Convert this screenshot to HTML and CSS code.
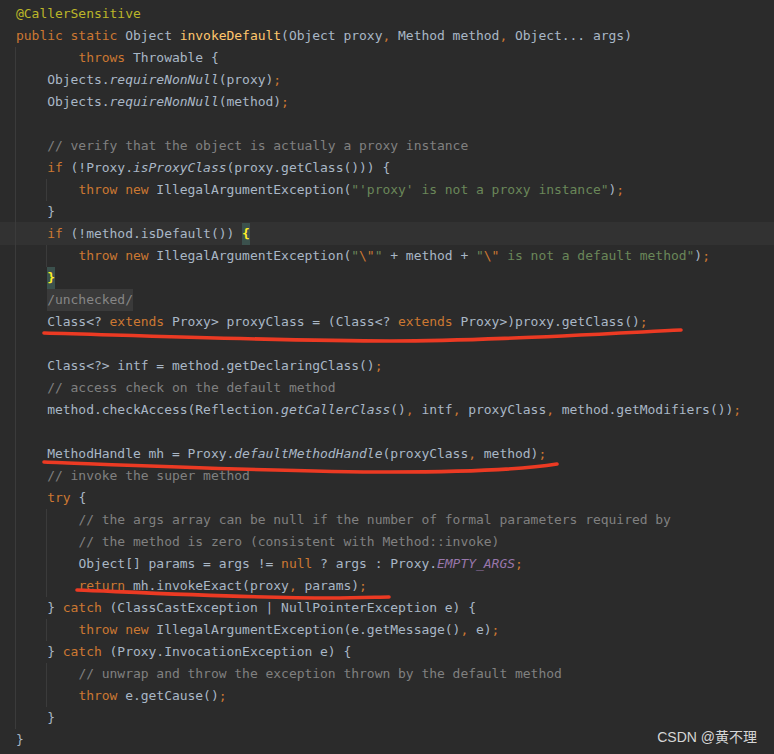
FILE: index.html
```html
<!DOCTYPE html>
<html>
<head>
<meta charset="utf-8">
<link rel="stylesheet" href="styles.css">
</head>
<body>
<div class="editor">
<div class="code">
<div class="ln"><span class="a">@CallerSensitive</span></div>
<div class="ln"><span class="k">public static </span>Object <span class="f">invokeDefault</span>(Object proxy<span class="k">, </span>Method method<span class="k">, </span>Object... args)</div>
<div class="ln"><span class="ind g"></span><span class="ind"></span><span class="k">throws </span>Throwable {</div>
<div class="ln"><span class="ind g"></span>Objects.<span class="i">requireNonNull</span>(proxy)<span class="k">;</span></div>
<div class="ln"><span class="ind g"></span>Objects.<span class="i">requireNonNull</span>(method)<span class="k">;</span></div>
<div class="ln"><span class="ind g"></span></div>
<div class="ln"><span class="ind g"></span><span class="c">// verify that the object is actually a proxy instance</span></div>
<div class="ln"><span class="ind g"></span><span class="k">if </span>(!Proxy.<span class="i">isProxyClass</span>(proxy.getClass())) {</div>
<div class="ln"><span class="ind g"></span><span class="ind g"></span><span class="k">throw new </span>IllegalArgumentException(<span class="s">"'proxy' is not a proxy instance"</span>)<span class="k">;</span></div>
<div class="ln"><span class="ind g"></span>}</div>
<div class="ln cur"><span class="ind g"></span><span class="k">if </span>(!method.isDefault()) <span class="br">{</span></div>
<div class="ln"><span class="ind g"></span><span class="ind g"></span><span class="k">throw new </span>IllegalArgumentException(<span class="s">"<span class="e">\"</span>"</span> + method + <span class="s">"<span class="e">\"</span> is not a default method"</span>)<span class="k">;</span></div>
<div class="ln"><span class="ind g"></span><span class="br">}</span></div>
<div class="ln"><span class="ind g"></span><span class="fold">/unchecked/</span></div>
<div class="ln"><span class="ind g"></span>Class&lt;? <span class="k">extends </span>Proxy&gt; proxyClass = (Class&lt;? <span class="k">extends </span>Proxy&gt;)proxy.getClass()<span class="k">;</span></div>
<div class="ln"><span class="ind g"></span></div>
<div class="ln"><span class="ind g"></span>Class&lt;?&gt; intf = method.getDeclaringClass()<span class="k">;</span></div>
<div class="ln"><span class="ind g"></span><span class="c">// access check on the default method</span></div>
<div class="ln"><span class="ind g"></span>method.checkAccess(Reflection.<span class="i">getCallerClass</span>()<span class="k">, </span>intf<span class="k">, </span>proxyClass<span class="k">, </span>method.getModifiers())<span class="k">;</span></div>
<div class="ln"><span class="ind g"></span></div>
<div class="ln"><span class="ind g"></span>MethodHandle mh = Proxy.<span class="i">defaultMethodHandle</span>(proxyClass<span class="k">, </span>method)<span class="k">;</span></div>
<div class="ln"><span class="ind g"></span><span class="c">// invoke the super method</span></div>
<div class="ln"><span class="ind g"></span><span class="k">try </span>{</div>
<div class="ln"><span class="ind g"></span><span class="ind g"></span><span class="c">// the args array can be null if the number of formal parameters required by</span></div>
<div class="ln"><span class="ind g"></span><span class="ind g"></span><span class="c">// the method is zero (consistent with Method::invoke)</span></div>
<div class="ln"><span class="ind g"></span><span class="ind g"></span>Object[] params = args != <span class="k">null </span>? args : Proxy.<span class="p">EMPTY_ARGS</span><span class="k">;</span></div>
<div class="ln"><span class="ind g"></span><span class="ind g"></span><span class="k">return </span>mh.invokeExact(proxy<span class="k">, </span>params)<span class="k">;</span></div>
<div class="ln"><span class="ind g"></span>} <span class="k">catch </span>(ClassCastException | NullPointerException e) {</div>
<div class="ln"><span class="ind g"></span><span class="ind g"></span><span class="k">throw new </span>IllegalArgumentException(e.getMessage()<span class="k">, </span>e)<span class="k">;</span></div>
<div class="ln"><span class="ind g"></span>} <span class="k">catch </span>(Proxy.InvocationException e) {</div>
<div class="ln"><span class="ind g"></span><span class="ind g"></span><span class="c">// unwrap and throw the exception thrown by the default method</span></div>
<div class="ln"><span class="ind g"></span><span class="ind g"></span><span class="k">throw </span>e.getCause()<span class="k">;</span></div>
<div class="ln"><span class="ind g"></span>}</div>
<div class="ln">}</div>
</div>
<svg class="marks" width="774" height="754" viewBox="0 0 774 754">
<path d="M44 333 C 150 336, 290 341, 390 341 C 470 341, 560 336, 681 330"/>
<path d="M44 462 C 150 466, 290 472, 390 472 C 460 472, 520 470, 557 464"/>
<path d="M77 590 C 150 593, 250 598, 330 598 C 360 598, 380 597, 389 597"/>
</svg>
<div class="wm">CSDN @黄不理</div>
</div>
</body>
</html>
```

FILE: styles.css
```css
html, body {
  margin: 0;
  padding: 0;
  background: #2b2b2b;
}
.editor {
  position: relative;
  width: 774px;
  height: 754px;
  overflow: hidden;
  background: #2b2b2b;
}
.code {
  padding-top: 3px;
  font-family: "DejaVu Sans Mono", "Liberation Mono", monospace;
  font-size: 13px;
  letter-spacing: -0.03px;
  color: #a9b7c6;
}
.ln {
  height: 22px;
  line-height: 22px;
  padding-left: 16px;
  white-space: pre;
}
.ln.cur {
  background: #323232;
  margin-top: -1px;
  padding-top: 1px;
}
.ind {
  display: inline-block;
  vertical-align: top;
  height: 22px;
  width: 31.2px;
  margin-left: -1px;
  padding-left: 1px;
}
.ind.g {
  background: linear-gradient(#3b3b3b, #3b3b3b) 0 0 / 1px 100% no-repeat;
}
.k { color: #cc7832; }
.c { color: #808080; }
.s { color: #6a8759; }
.e { color: #cc7832; }
.a { color: #bbb529; }
.f { color: #ffc66d; }
.i { font-style: italic; }
.p { color: #9876aa; font-style: italic; }
.br {
  display: inline-block;
  vertical-align: top;
  height: 22px;
  background: #3b514d;
  color: #ffef28;
  font-weight: bold;
}
.fold {
  display: inline-block;
  vertical-align: top;
  height: 22px;
  background: #3a3a3a;
  color: #868686;
}
.marks {
  position: absolute;
  left: 0;
  top: 0;
  pointer-events: none;
}
.marks path {
  fill: none;
  stroke: #ec3a23;
  stroke-width: 3.6;
  stroke-linecap: round;
}
.wm {
  position: absolute;
  right: 17px;
  bottom: 8px;
  font-family: "Liberation Sans", "Noto Sans CJK SC", sans-serif;
  font-size: 14px;
  color: #d6d6d6;
}
```
